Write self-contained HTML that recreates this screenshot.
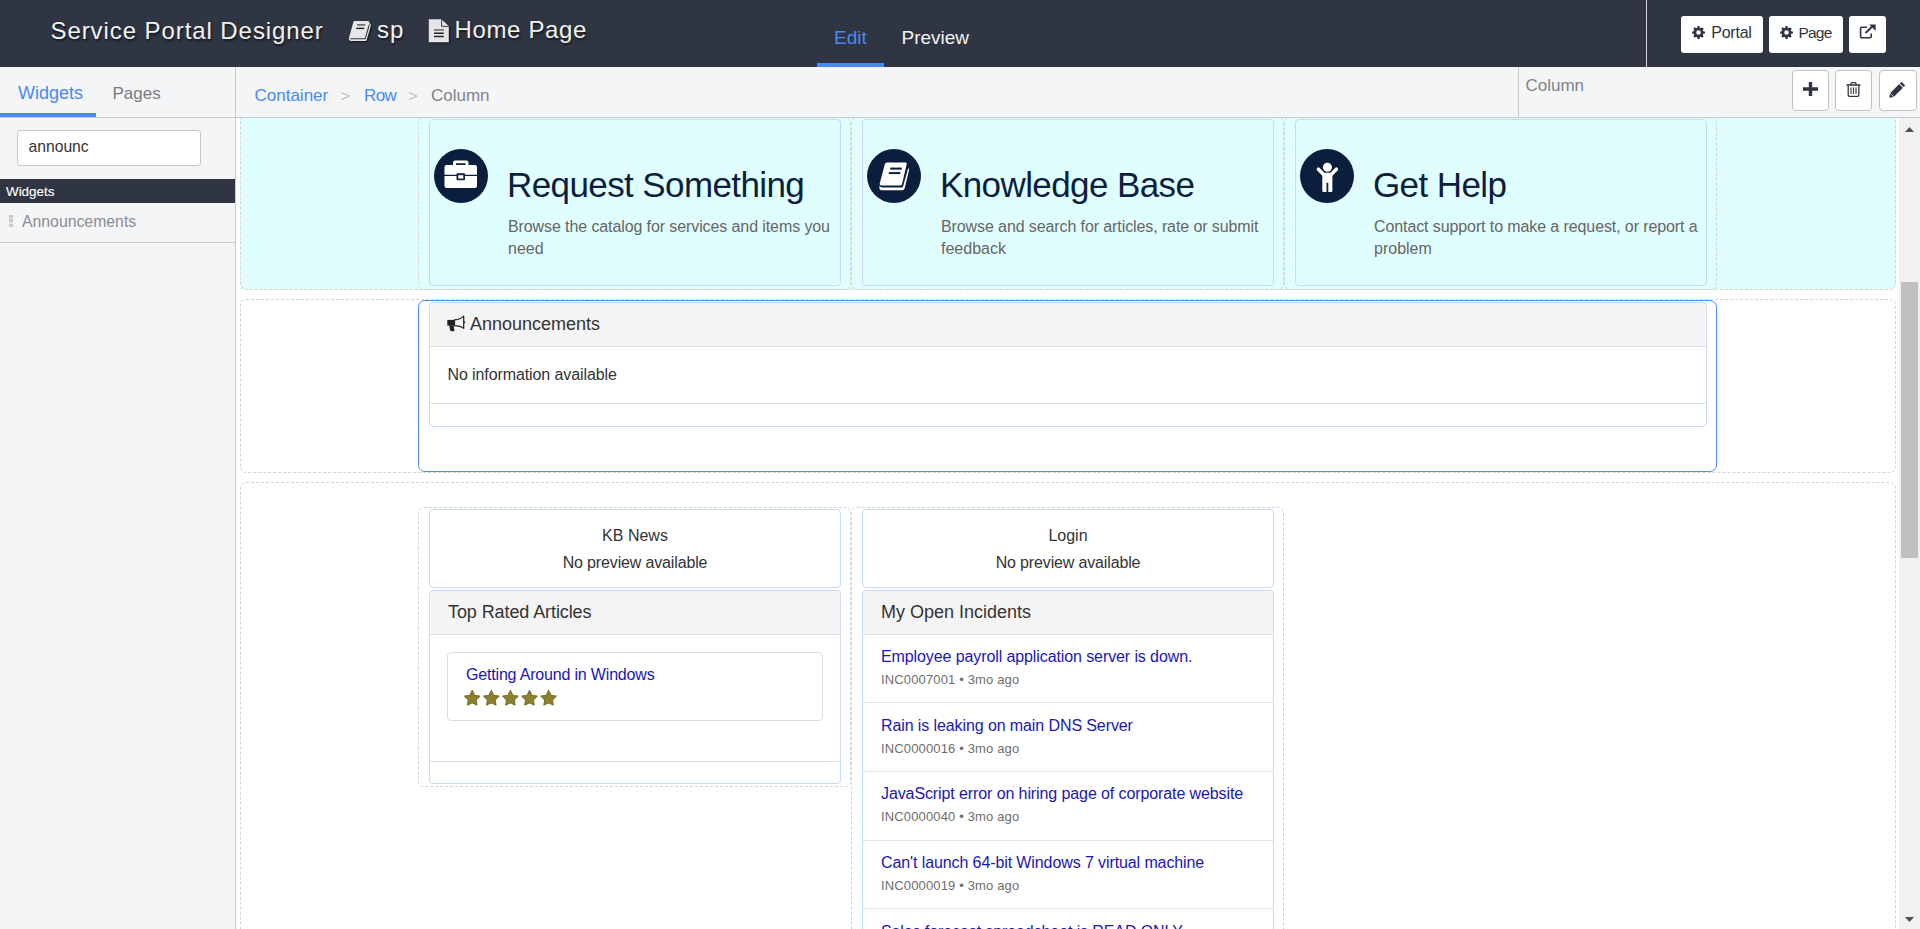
<!DOCTYPE html>
<html><head><meta charset="utf-8"><title>Service Portal Designer</title>
<style>
html,body{margin:0;padding:0;width:1920px;height:929px;overflow:hidden;background:#fff;}
body{position:relative;font-family:"Liberation Sans", sans-serif;}
.a{position:absolute;}
.t{white-space:nowrap;}
</style></head><body>
<div class="a" style="left:0px;top:0px;width:1920px;height:929px;background:#ffffff;"></div>
<div class="a" style="left:0px;top:0px;width:1920px;height:67px;background:#2f3542;"></div>
<div class="a" style="left:0px;top:67px;width:1920px;height:50px;background:#f4f5f7;"></div>
<div class="a" style="left:0px;top:117px;width:235px;height:812px;background:#f4f5f7;"></div>
<div class="a" style="left:0px;top:117px;width:1920px;height:1px;background:#c9cacd;"></div>
<div class="a" style="left:235px;top:67px;width:1px;height:862px;background:#c9cacd;"></div>
<div class="a" style="left:1518px;top:67px;width:1px;height:50px;background:#c9cacd;"></div>
<div class="a" style="left:1646px;top:0px;width:1px;height:67px;background:#d2d4d8;"></div>
<div class="a t" style="left:50.5px;top:18.68px;font-size:24px;line-height:24px;color:#f2f2f2;letter-spacing:0.92px;text-shadow:1px 2px 2px rgba(0,0,0,0.55);">Service Portal Designer</div>
<div class="a t" style="left:377px;top:18.38px;font-size:24px;line-height:24px;color:#f2f2f2;letter-spacing:1.0px;text-shadow:1px 2px 2px rgba(0,0,0,0.55);">sp</div>
<div class="a t" style="left:454.5px;top:18.38px;font-size:24px;line-height:24px;color:#f2f2f2;letter-spacing:0.65px;text-shadow:1px 2px 2px rgba(0,0,0,0.55);">Home Page</div>
<svg class="a" style="left:344px;top:14px;filter:drop-shadow(1px 1.5px 1.2px rgba(0,0,0,.6))" width="32" height="32" viewBox="0 0 32 32"><path d="M10.6 6.9 H24.2 Q25.3 6.9 25 8 L26.4 10.3 Q27.1 10.6 26.9 11.4 L22.7 25.9 Q22.4 26.9 21.4 26.9 H7.3 Q4.6 26.9 4.9 24 L9.4 8 Q9.7 6.9 10.6 6.9 Z" fill="#e6e6e6"/><path d="M6.4 24.8 H21.2 L25.3 10.6" fill="none" stroke="#2f3542" stroke-width="1.1"/><path d="M13 10.9 H21.2" stroke="#6b6b6b" stroke-width="1.7"/><path d="M12.2 14.4 H20.2" stroke="#222" stroke-width="1.4"/></svg>
<svg class="a" style="left:424px;top:14px;filter:drop-shadow(1px 1.5px 1.2px rgba(0,0,0,.6))" width="32" height="32" viewBox="0 0 32 32"><path d="M4.8 5.2 H17.4 L24.8 11.9 V28.3 H4.8 Z" fill="#e6e6e6"/><path d="M17.6 5.4 V12.3 H24.6" fill="none" stroke="#2f3542" stroke-width="1"/><path d="M10 16 H19.8" stroke="#6b6b6b" stroke-width="1.6"/><path d="M10 19.3 H19.8 M10 22.6 H19.8" stroke="#222" stroke-width="1.5"/></svg>
<div class="a t" style="left:834px;top:27.91px;font-size:19px;line-height:19px;color:#4a89f3;">Edit</div>
<div class="a t" style="left:901.5px;top:27.91px;font-size:19px;line-height:19px;color:#f2f2f2;">Preview</div>
<div class="a" style="left:817px;top:63px;width:67px;height:4px;background:#4a89f3;"></div>
<div class="a" style="left:1681px;top:16px;width:82px;height:37px;background:#ffffff;border-radius:3px;"></div>
<div class="a" style="left:1769px;top:16px;width:74px;height:37px;background:#ffffff;border-radius:3px;"></div>
<div class="a" style="left:1849px;top:16px;width:37px;height:37px;background:#ffffff;border-radius:3px;"></div>
<svg class="a" style="left:1692.4px;top:26.2px" width="13" height="13" viewBox="0 0 16 16"><path fill="#2f3542" d="M8 0 L9.3 0.2 L9.6 2.1 L10.9 2.7 L12.5 1.6 L14.4 3.5 L13.3 5.1 L13.9 6.4 L15.8 6.7 L16 8 L15.8 9.3 L13.9 9.6 L13.3 10.9 L14.4 12.5 L12.5 14.4 L10.9 13.3 L9.6 13.9 L9.3 15.8 L8 16 L6.7 15.8 L6.4 13.9 L5.1 13.3 L3.5 14.4 L1.6 12.5 L2.7 10.9 L2.1 9.6 L0.2 9.3 L0 8 L0.2 6.7 L2.1 6.4 L2.7 5.1 L1.6 3.5 L3.5 1.6 L5.1 2.7 L6.4 2.1 L6.7 0.2 Z M8 5.2 A2.8 2.8 0 1 0 8 10.8 A2.8 2.8 0 1 0 8 5.2 Z"/></svg>
<svg class="a" style="left:1779.6px;top:26.2px" width="13" height="13" viewBox="0 0 16 16"><path fill="#2f3542" d="M8 0 L9.3 0.2 L9.6 2.1 L10.9 2.7 L12.5 1.6 L14.4 3.5 L13.3 5.1 L13.9 6.4 L15.8 6.7 L16 8 L15.8 9.3 L13.9 9.6 L13.3 10.9 L14.4 12.5 L12.5 14.4 L10.9 13.3 L9.6 13.9 L9.3 15.8 L8 16 L6.7 15.8 L6.4 13.9 L5.1 13.3 L3.5 14.4 L1.6 12.5 L2.7 10.9 L2.1 9.6 L0.2 9.3 L0 8 L0.2 6.7 L2.1 6.4 L2.7 5.1 L1.6 3.5 L3.5 1.6 L5.1 2.7 L6.4 2.1 L6.7 0.2 Z M8 5.2 A2.8 2.8 0 1 0 8 10.8 A2.8 2.8 0 1 0 8 5.2 Z"/></svg>
<div class="a t" style="left:1711.3px;top:24.95px;font-size:16px;line-height:16px;color:#2f3542;letter-spacing:-0.25px;">Portal</div>
<div class="a t" style="left:1798.4px;top:24.88px;font-size:15.5px;line-height:15.5px;color:#2f3542;letter-spacing:-0.75px;">Page</div>
<svg class="a" style="left:1859px;top:24px" width="18" height="15" viewBox="0 0 18 15"><path d="M8 3.2 H3 Q1.6 3.2 1.6 4.6 V12.4 Q1.6 13.8 3 13.8 H10.8 Q12.2 13.8 12.2 12.4 V9.5" fill="none" stroke="#2f3542" stroke-width="1.6"/><path d="M6.5 9 L14 1.8" stroke="#2f3542" stroke-width="1.9"/><path d="M10.3 0.6 H16.6 V6.9 Z" fill="#2f3542"/></svg>
<div class="a t" style="left:18px;top:83.76px;font-size:18px;line-height:18px;color:#4a89f3;">Widgets</div>
<div class="a t" style="left:112.5px;top:84.61px;font-size:17px;line-height:17px;color:#777b82;">Pages</div>
<div class="a" style="left:0px;top:113px;width:96px;height:4px;background:#4a89f3;"></div>
<div class="a t" style="left:254.5px;top:87.01px;font-size:17px;line-height:17px;color:#4a89f3;">Container</div>
<div class="a t" style="left:341px;top:87.85px;font-size:16px;line-height:16px;color:#b9b9b9;transform:scaleY(0.95);">&gt;</div>
<div class="a t" style="left:364px;top:87.01px;font-size:17px;line-height:17px;color:#4a89f3;letter-spacing:-0.6px;">Row</div>
<div class="a t" style="left:408.5px;top:87.85px;font-size:16px;line-height:16px;color:#b9b9b9;transform:scaleY(0.95);">&gt;</div>
<div class="a t" style="left:431px;top:87.01px;font-size:17px;line-height:17px;color:#80848a;">Column</div>
<div class="a t" style="left:1525.5px;top:76.61px;font-size:17px;line-height:17px;color:#80848a;">Column</div>
<div class="a" style="left:1792px;top:70px;width:37px;height:41px;background:#ffffff;border:1px solid #bfc1c5;border-radius:4px;box-sizing:border-box;"></div>
<div class="a" style="left:1835px;top:70px;width:37px;height:41px;background:#ffffff;border:1px solid #bfc1c5;border-radius:4px;box-sizing:border-box;"></div>
<div class="a" style="left:1879px;top:70px;width:38px;height:41px;background:#ffffff;border:1px solid #bfc1c5;border-radius:4px;box-sizing:border-box;"></div>
<svg class="a" style="left:1803px;top:82px" width="15" height="14" viewBox="0 0 15 14"><path d="M7.5 0 V14 M0 7 H15" stroke="#2f3542" stroke-width="3.4"/></svg>
<svg class="a" style="left:1846px;top:82px" width="15" height="15" viewBox="0 0 15 15"><path d="M0.5 3 H14.5" stroke="#2f3542" stroke-width="1.5"/><path d="M5 3 V1.5 Q5 0.7 6 0.7 H9 Q10 0.7 10 1.5 V3" fill="none" stroke="#2f3542" stroke-width="1.2"/><path d="M2.2 3.5 V13 Q2.2 14.3 3.5 14.3 H11.5 Q12.8 14.3 12.8 13 V3.5" fill="none" stroke="#2f3542" stroke-width="1.3"/><path d="M5 5.5 V12 M7.5 5.5 V12 M10 5.5 V12" stroke="#2f3542" stroke-width="1.1"/></svg>
<svg class="a" style="left:1889px;top:81px" width="17" height="17" viewBox="0 0 17 17"><path d="M12.5 0.8 L16.2 4.5 L14.6 6.1 L10.9 2.4 Z" fill="#2f3542"/><path d="M10.2 3.1 L13.9 6.8 L5 15.7 L1.3 12 Z" fill="#2f3542"/><path d="M1 12.5 L4.5 16 L0.3 16.7 Z" fill="#2f3542"/></svg>
<div class="a" style="left:17px;top:130px;width:184px;height:36px;background:#ffffff;border:1px solid #c7c8cb;border-radius:3px;box-sizing:border-box;"></div>
<div class="a t" style="left:28.5px;top:139.01px;font-size:15.7px;line-height:15.7px;color:#333333;">announc</div>
<div class="a" style="left:0px;top:179px;width:235px;height:24px;background:#2f3542;"></div>
<div class="a t" style="left:6px;top:184.65px;font-size:13.4px;line-height:13.4px;color:#ffffff;-webkit-text-stroke:0.12px #fff;">Widgets</div>
<div class="a" style="left:9px;top:215px;width:4px;height:12px;background:repeating-linear-gradient(#c9c9c9 0 3px, #e4e4e4 3px 4.3px)"></div>
<div class="a t" style="left:22px;top:213.62px;font-size:15.8px;line-height:15.8px;color:#8a8d92;">Announcements</div>
<div class="a" style="left:0px;top:242px;width:235px;height:1px;background:#c9cacd;"></div>
<div class="a" style="left:0;top:0;width:1920px;height:929px;clip-path:inset(118px 0 0 236px)">
<div class="a" style="left:240px;top:112px;width:1656px;height:178px;background:#e1fefe;border:1px dashed #d4d4d4;border-radius:6px;box-sizing:border-box;"></div>
<div class="a" style="left:418px;top:117px;width:433px;height:173px;border:1px dashed #d4d4d4;border-radius:6px;box-sizing:border-box;"></div>
<div class="a" style="left:851px;top:117px;width:433px;height:173px;border:1px dashed #d4d4d4;border-radius:6px;box-sizing:border-box;"></div>
<div class="a" style="left:1284px;top:117px;width:433px;height:173px;border:1px dashed #d4d4d4;border-radius:6px;box-sizing:border-box;"></div>
<div class="a" style="left:429px;top:119px;width:412px;height:167px;border:1px solid #c6d9f6;border-radius:4px;box-sizing:border-box;"></div>
<div class="a" style="left:434px;top:149px;width:54px;height:54px;background:#0c1e3e;border-radius:27px;"></div>
<div class="a t" style="left:507px;top:167.37px;font-size:35px;line-height:35px;color:#0c1e3e;letter-spacing:-0.6px;">Request Something</div>
<div class="a t" style="left:508px;top:218.75px;font-size:16px;line-height:16px;color:#666666;letter-spacing:-0.1px;">Browse the catalog for services and items you</div>
<div class="a t" style="left:508px;top:240.65px;font-size:16px;line-height:16px;color:#666666;">need</div>
<svg class="a" style="left:444px;top:160px" width="34" height="29" viewBox="0 0 34 29"><path d="M9 5 V2.5 Q9 0.5 11 0.5 H22.5 Q24.5 0.5 24.5 2.5 V5 H21.5 V3.3 H12 V5 Z" fill="#fff"/><path d="M2.5 5 H31 Q33 5 33 7 V14.8 H21 V14 Q21 13.2 20.2 13.2 H13.3 Q12.5 13.2 12.5 14 V14.8 H0.5 V7 Q0.5 5 2.5 5 Z" fill="#fff"/><path d="M0.5 16 H12.5 V19.5 Q12.5 20.3 13.3 20.3 H20.2 Q21 20.3 21 19.5 V16 H33 V26 Q33 28 31 28 H2.5 Q0.5 28 0.5 26 Z" fill="#fff"/><path d="M14.3 15.2 H19.3 V18.6 H14.3 Z" fill="#fff"/></svg>
<div class="a" style="left:862px;top:119px;width:412px;height:167px;border:1px solid #c6d9f6;border-radius:4px;box-sizing:border-box;"></div>
<div class="a" style="left:867px;top:149px;width:54px;height:54px;background:#0c1e3e;border-radius:27px;"></div>
<div class="a t" style="left:940px;top:167.37px;font-size:35px;line-height:35px;color:#0c1e3e;letter-spacing:-0.6px;">Knowledge Base</div>
<div class="a t" style="left:941px;top:218.75px;font-size:16px;line-height:16px;color:#666666;letter-spacing:-0.1px;">Browse and search for articles, rate or submit</div>
<div class="a t" style="left:941px;top:240.65px;font-size:16px;line-height:16px;color:#666666;">feedback</div>
<svg class="a" style="left:870px;top:150px" width="50" height="50" viewBox="0 0 50 50"><path d="M38.2 18.2 Q39.4 18.6 39.1 20 L34.6 38.4 Q34.2 40.2 32.2 40.2 L12.2 40.2 Q9.2 40.2 9.4 37.4 L9.6 35.2 Q10 37.6 12.4 37.6 L31.6 37.6 Q32.8 37.6 33.1 36.3 Z" fill="#fff"/><path d="M17 12.4 L35.6 12.4 Q37.1 12.4 36.7 13.9 L32.1 34 Q31.8 35.4 30.3 35.4 L11.2 35.4 Q9.3 35.4 9.7 33.6 L14.9 14 Q15.4 12.4 17 12.4 Z" fill="#fff"/><path d="M20.2 18.6 H31.8" stroke="#0c1e3e" stroke-width="2.1"/><path d="M18.8 23.1 H30.3" stroke="#0c1e3e" stroke-width="2"/></svg>
<div class="a" style="left:1295px;top:119px;width:412px;height:167px;border:1px solid #c6d9f6;border-radius:4px;box-sizing:border-box;"></div>
<div class="a" style="left:1300px;top:149px;width:54px;height:54px;background:#0c1e3e;border-radius:27px;"></div>
<div class="a t" style="left:1373px;top:167.37px;font-size:35px;line-height:35px;color:#0c1e3e;letter-spacing:-0.6px;">Get Help</div>
<div class="a t" style="left:1374px;top:218.75px;font-size:16px;line-height:16px;color:#666666;letter-spacing:-0.1px;">Contact support to make a request, or report a</div>
<div class="a t" style="left:1374px;top:240.65px;font-size:16px;line-height:16px;color:#666666;">problem</div>
<svg class="a" style="left:1300px;top:150px" width="54" height="54" viewBox="0 0 54 54"><circle cx="27.4" cy="17.2" r="4.5" fill="#fff"/><path d="M18.4 19.2 L23.6 24.4 H31.2 L36.4 19.2" fill="none" stroke="#fff" stroke-width="3.5" stroke-linecap="round" stroke-linejoin="round"/><path d="M22.3 23.4 H32.4 V40.8 Q32.4 42 31.2 42 H28.3 V32.8 H26.5 V42 H23.5 Q22.3 42 22.3 40.8 Z" fill="#fff"/></svg>
<div class="a" style="left:240px;top:299px;width:1656px;height:174px;border:1px dashed #d4d4d4;border-radius:6px;box-sizing:border-box;"></div>
<div class="a" style="left:418px;top:300px;width:1299px;height:172px;border:1.3px solid #4d8cf0;border-radius:7px;box-sizing:border-box;"></div>
<div class="a" style="left:429px;top:302px;width:1278px;height:125px;border:1px solid #c6d9f6;border-radius:4px;box-sizing:border-box;"></div>
<div class="a" style="left:430px;top:303px;width:1276px;height:43px;background:#f4f4f4;border-radius:3px;"></div>
<div class="a" style="left:430px;top:346px;width:1276px;height:1px;background:#dcdcdc;"></div>
<div class="a" style="left:429px;top:302px;width:1278px;height:102px;border:1px solid transparent;border-radius:4px;box-sizing:border-box;border-bottom-color:#dde0e3;border-left-color:rgba(221,224,227,0.5);border-right-color:rgba(221,224,227,0.5);"></div>
<svg class="a" style="left:446px;top:315px" width="21" height="18" viewBox="0 0 21 18"><path d="M8.5 4.9 Q14.5 4.6 17.7 1.2 V13.4 Q14.5 10.8 8.5 10.7 Z" fill="#f4f4f4" stroke="#222" stroke-width="1.2" stroke-linejoin="round"/><path d="M1.3 4.9 H8.9 V10.7 H1.3 Z" fill="#222"/><path d="M3.2 10.5 H7.6 L8.4 15.2 Q8.5 16.2 7.5 16.2 H5.2 Q4.4 16.2 4.2 15.4 Z" fill="#222"/><path d="M17.6 5.8 L19.6 7.3 L17.6 8.8 Z" fill="#222"/></svg>
<div class="a t" style="left:470px;top:314.76px;font-size:18px;line-height:18px;color:#333333;">Announcements</div>
<div class="a t" style="left:447.5px;top:367.45px;font-size:16px;line-height:16px;color:#333333;letter-spacing:-0.1px;">No information available</div>
<div class="a" style="left:240px;top:482px;width:1656px;height:518px;border:1px dashed #d4d4d4;border-radius:6px;box-sizing:border-box;"></div>
<div class="a" style="left:418px;top:507px;width:433px;height:280px;border:1px dashed #d4d4d4;border-radius:6px;box-sizing:border-box;"></div>
<div class="a" style="left:851px;top:507px;width:433px;height:493px;border:1px dashed #d4d4d4;border-radius:6px;box-sizing:border-box;"></div>
<div class="a" style="left:429px;top:509px;width:412px;height:79px;border:1px solid #c6d9f6;border-radius:4px;box-sizing:border-box;"></div>
<div class="a t" style="left:429px;top:528.45px;font-size:16px;line-height:16px;color:#333333;width:412px;text-align:center;">KB News</div>
<div class="a t" style="left:429px;top:555.15px;font-size:16px;line-height:16px;color:#333333;letter-spacing:-0.15px;width:412px;text-align:center;">No preview available</div>
<div class="a" style="left:429px;top:590px;width:412px;height:194px;border:1px solid #c6d9f6;border-radius:4px;box-sizing:border-box;"></div>
<div class="a" style="left:430px;top:591px;width:410px;height:43px;background:#f4f4f4;border-radius:3px;"></div>
<div class="a" style="left:430px;top:634px;width:410px;height:1px;background:#dcdcdc;"></div>
<div class="a" style="left:429px;top:590px;width:412px;height:172px;border:1px solid transparent;border-radius:4px;box-sizing:border-box;border-bottom-color:#dde0e3;border-left-color:rgba(221,224,227,0.5);border-right-color:rgba(221,224,227,0.5);"></div>
<div class="a t" style="left:448px;top:603.06px;font-size:18px;line-height:18px;color:#333333;letter-spacing:-0.09px;">Top Rated Articles</div>
<div class="a" style="left:447px;top:652px;width:376px;height:69px;border:1px solid #dddddd;border-radius:4px;box-sizing:border-box;"></div>
<div class="a t" style="left:466px;top:667.35px;font-size:16px;line-height:16px;color:#1b17b0;letter-spacing:-0.18px;">Getting Around in Windows</div>
<svg class="a" style="left:464px;top:690px" width="94" height="17" viewBox="0 0 94 17"><g transform="translate(0.0,0)"><path d="M8.20 0.60 L10.61 5.28 L15.81 6.13 L12.10 9.87 L12.90 15.07 L8.20 12.70 L3.50 15.07 L4.30 9.87 L0.59 6.13 L5.79 5.28 Z" fill="#8b812f" stroke="#7a7026" stroke-width="1.1" stroke-linejoin="round"/></g><g transform="translate(19.1,0)"><path d="M8.20 0.60 L10.61 5.28 L15.81 6.13 L12.10 9.87 L12.90 15.07 L8.20 12.70 L3.50 15.07 L4.30 9.87 L0.59 6.13 L5.79 5.28 Z" fill="#8b812f" stroke="#7a7026" stroke-width="1.1" stroke-linejoin="round"/></g><g transform="translate(38.2,0)"><path d="M8.20 0.60 L10.61 5.28 L15.81 6.13 L12.10 9.87 L12.90 15.07 L8.20 12.70 L3.50 15.07 L4.30 9.87 L0.59 6.13 L5.79 5.28 Z" fill="#8b812f" stroke="#7a7026" stroke-width="1.1" stroke-linejoin="round"/></g><g transform="translate(57.300000000000004,0)"><path d="M8.20 0.60 L10.61 5.28 L15.81 6.13 L12.10 9.87 L12.90 15.07 L8.20 12.70 L3.50 15.07 L4.30 9.87 L0.59 6.13 L5.79 5.28 Z" fill="#8b812f" stroke="#7a7026" stroke-width="1.1" stroke-linejoin="round"/></g><g transform="translate(76.4,0)"><path d="M8.20 0.60 L10.61 5.28 L15.81 6.13 L12.10 9.87 L12.90 15.07 L8.20 12.70 L3.50 15.07 L4.30 9.87 L0.59 6.13 L5.79 5.28 Z" fill="#8b812f" stroke="#7a7026" stroke-width="1.1" stroke-linejoin="round"/></g></svg>
<div class="a" style="left:862px;top:509px;width:412px;height:79px;border:1px solid #c6d9f6;border-radius:4px;box-sizing:border-box;"></div>
<div class="a t" style="left:862px;top:528.45px;font-size:16px;line-height:16px;color:#333333;width:412px;text-align:center;">Login</div>
<div class="a t" style="left:862px;top:555.45px;font-size:16px;line-height:16px;color:#333333;letter-spacing:-0.15px;width:412px;text-align:center;">No preview available</div>
<div class="a" style="left:862px;top:590px;width:412px;height:410px;border:1px solid #c6d9f6;border-radius:4px;box-sizing:border-box;"></div>
<div class="a" style="left:863px;top:591px;width:410px;height:43px;background:#f4f4f4;border-radius:3px;"></div>
<div class="a" style="left:863px;top:634px;width:410px;height:1px;background:#dcdcdc;"></div>
<div class="a t" style="left:881px;top:603.26px;font-size:18px;line-height:18px;color:#333333;">My Open Incidents</div>
<div class="a t" style="left:881px;top:649.35px;font-size:16px;line-height:16px;color:#1b17b0;letter-spacing:-0.1px;">Employee payroll application server is down.</div>
<div class="a t" style="left:881px;top:672.79px;font-size:13px;line-height:13px;color:#6e6e6e;letter-spacing:0.15px;">INC0007001 &bull; 3mo ago</div>
<div class="a" style="left:863px;top:702px;width:410px;height:1px;background:#e2e2e2;"></div>
<div class="a t" style="left:881px;top:718.25px;font-size:16px;line-height:16px;color:#1b17b0;letter-spacing:-0.1px;">Rain is leaking on main DNS Server</div>
<div class="a t" style="left:881px;top:741.99px;font-size:13px;line-height:13px;color:#6e6e6e;letter-spacing:0.15px;">INC0000016 &bull; 3mo ago</div>
<div class="a" style="left:863px;top:771px;width:410px;height:1px;background:#e2e2e2;"></div>
<div class="a t" style="left:881px;top:785.75px;font-size:16px;line-height:16px;color:#1b17b0;letter-spacing:-0.1px;">JavaScript error on hiring page of corporate website</div>
<div class="a t" style="left:881px;top:810.29px;font-size:13px;line-height:13px;color:#6e6e6e;letter-spacing:0.15px;">INC0000040 &bull; 3mo ago</div>
<div class="a" style="left:863px;top:840px;width:410px;height:1px;background:#e2e2e2;"></div>
<div class="a t" style="left:881px;top:855.35px;font-size:16px;line-height:16px;color:#1b17b0;letter-spacing:-0.1px;">Can't launch 64-bit Windows 7 virtual machine</div>
<div class="a t" style="left:881px;top:878.79px;font-size:13px;line-height:13px;color:#6e6e6e;letter-spacing:0.15px;">INC0000019 &bull; 3mo ago</div>
<div class="a" style="left:863px;top:908px;width:410px;height:1px;background:#e2e2e2;"></div>
<div class="a t" style="left:881px;top:923.95px;font-size:16px;line-height:16px;color:#1b17b0;letter-spacing:-0.1px;">Sales forecast spreadsheet is READ ONLY</div>
<div class="a t" style="left:881px;top:946.99px;font-size:13px;line-height:13px;color:#6e6e6e;letter-spacing:0.15px;">INC0000020 &bull; 3mo ago</div>
</div>
<div class="a" style="left:1899px;top:118px;width:21px;height:811px;background:#f1f1f1;"></div>
<div class="a" style="left:1901px;top:282px;width:17px;height:276px;background:#c1c1c1;"></div>
<svg class="a" style="left:1904px;top:126px" width="11" height="7" viewBox="0 0 11 7"><path d="M1 6 L5.5 1 L10 6 Z" fill="#505050"/></svg>
<svg class="a" style="left:1904px;top:916px" width="11" height="7" viewBox="0 0 11 7"><path d="M1 1 L5.5 6 L10 1 Z" fill="#505050"/></svg>
</body></html>
